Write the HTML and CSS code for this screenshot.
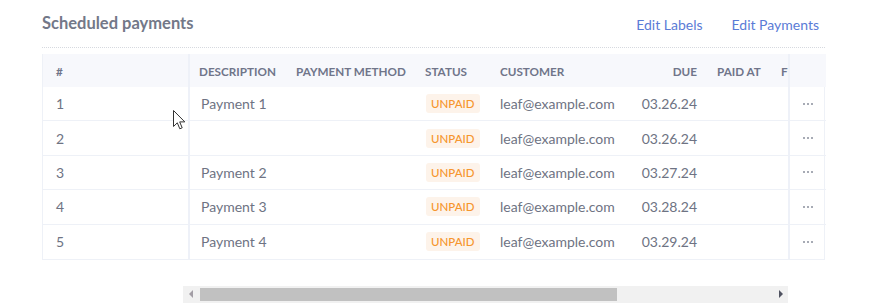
FILE: index.html
```html
<!DOCTYPE html>
<html lang="en">
<head>
  <meta charset="UTF-8">
  <title>Scheduled payments</title>
  <link rel="stylesheet" href="styles.css">
</head>
<body>
  <div class="panel">
    <div class="panel-head">
      <h3 class="panel-title">Scheduled payments</h3>
      <div class="panel-links">
        <a href="#">Edit Labels</a>
        <a href="#">Edit Payments</a>
      </div>
    </div>

    <div class="grid">
      <div class="col-fixed">
        <div class="cell head">#</div>
        <div class="cell">1</div>
        <div class="cell">2</div>
        <div class="cell">3</div>
        <div class="cell">4</div>
        <div class="cell">5</div>
      </div>

      <div class="col-scroll">
        <div class="row head">
          <div class="c desc">Description</div>
          <div class="c method">Payment method</div>
          <div class="c status">Status</div>
          <div class="c customer">Customer</div>
          <div class="c due">Due</div>
          <div class="c paid">Paid at</div>
          <div class="c fee">Fee</div>
        </div>
        <div class="row">
          <div class="c desc">Payment 1</div>
          <div class="c method"></div>
          <div class="c status"><span class="badge">UNPAID</span></div>
          <div class="c customer">leaf@example.com</div>
          <div class="c due">03.26.24</div>
          <div class="c paid"></div>
          <div class="c fee"></div>
        </div>
        <div class="row">
          <div class="c desc"></div>
          <div class="c method"></div>
          <div class="c status"><span class="badge">UNPAID</span></div>
          <div class="c customer">leaf@example.com</div>
          <div class="c due">03.26.24</div>
          <div class="c paid"></div>
          <div class="c fee"></div>
        </div>
        <div class="row">
          <div class="c desc">Payment 2</div>
          <div class="c method"></div>
          <div class="c status"><span class="badge">UNPAID</span></div>
          <div class="c customer">leaf@example.com</div>
          <div class="c due">03.27.24</div>
          <div class="c paid"></div>
          <div class="c fee"></div>
        </div>
        <div class="row">
          <div class="c desc">Payment 3</div>
          <div class="c method"></div>
          <div class="c status"><span class="badge">UNPAID</span></div>
          <div class="c customer">leaf@example.com</div>
          <div class="c due">03.28.24</div>
          <div class="c paid"></div>
          <div class="c fee"></div>
        </div>
        <div class="row">
          <div class="c desc">Payment 4</div>
          <div class="c method"></div>
          <div class="c status"><span class="badge">UNPAID</span></div>
          <div class="c customer">leaf@example.com</div>
          <div class="c due">03.29.24</div>
          <div class="c paid"></div>
          <div class="c fee"></div>
        </div>
      </div>

      <div class="col-actions">
        <div class="cell head"></div>
        <div class="cell"><span class="dots"><i></i><i></i><i></i></span></div>
        <div class="cell"><span class="dots"><i></i><i></i><i></i></span></div>
        <div class="cell"><span class="dots"><i></i><i></i><i></i></span></div>
        <div class="cell"><span class="dots"><i></i><i></i><i></i></span></div>
        <div class="cell"><span class="dots"><i></i><i></i><i></i></span></div>
      </div>

      <svg class="cursor" width="13" height="21" viewBox="0 0 13 21">
        <path d="M0.5 0.5 L0.5 16.5 L4.3 12.8 L6.8 18.8 L9.2 17.8 L6.7 11.9 L11.8 11.9 Z" fill="#fff" stroke="#333" stroke-width="1"/>
      </svg>
    </div>

    <div class="hscroll">
      <span class="arrow left"></span>
      <div class="track"><div class="thumb"></div></div>
      <span class="arrow right"></span>
    </div>
  </div>
</body>
</html>
```

FILE: styles.css
```css
html, body { margin: 0; padding: 0; background: #fff; }
body { font-family: Lato, "Open Sans", sans-serif; color: #6e7383; }

.panel { width: 783px; margin-left: 42px; }

.panel-head { display: flex; justify-content: space-between; align-items: flex-start; height: 47px; border-bottom: 1px dotted #d6d9df; }
.panel-title { margin: 13px 0 0 0; font-size: 16.5px; font-weight: 700; color: #737888; }
.panel-links { display: flex; gap: 29px; margin: 16px 6px 0 0; }
.panel-links a { font-size: 14px; color: #5a7bd6; text-decoration: none; }

.grid { position: relative; display: flex; margin-top: 6px; border: 1px solid #eef1f7; border-top: 0; }

.cell, .row { height: 34.4px; box-sizing: border-box; border-bottom: 1px solid #eef1f7; }
.head { height: 33px; background: #f7f8fc; border-bottom: 0; font-size: 11.7px; font-weight: 700; color: #70758a; text-transform: uppercase; }
.row.head .c { height: 33px; }

.col-fixed { width: 145px; flex: none; border-right: 2px solid #eef1f8; }
.col-fixed .cell { display: flex; align-items: center; padding-left: 13px; font-size: 14px; }
.col-fixed .cell.head { font-size: 11.7px; }
.col-fixed .cell:last-child, .col-actions .cell:last-child, .row:last-child { border-bottom: 0; }

.col-scroll { width: 598px; flex: none; overflow: hidden; }
.row { display: flex; width: 700px; }
.c { flex: none; display: flex; align-items: center; box-sizing: border-box; padding-left: 10px; font-size: 14px; white-space: nowrap; }
.row.head .c { font-size: 11.7px; }
.desc { width: 96px; padding-left: 11px; }
.row.head .desc { padding-left: 9px; }
.method { width: 129px; }
.status { width: 75px; }
.customer { width: 131px; }
.due { width: 86px; justify-content: flex-end; padding-left: 0; padding-right: 10px; }
.paid { width: 64px; }
.fee { width: 100px; }

.badge { display: inline-block; margin-left: 1px; padding: 4px 5px 3px 5px; border-radius: 3px; background: #fdf3ea; color: #f6962e; font-size: 11.5px; font-weight: 500; line-height: 12px; }

.col-actions { width: 36px; flex: none; border-left: 2px solid #eef1f8; }
.col-actions .cell { display: flex; align-items: center; justify-content: center; }
.dots { display: flex; gap: 2px; }
.dots i { width: 2px; height: 2px; border-radius: 1px; background: #8a8f9c; }

.cursor { position: absolute; left: 130px; top: 56px; }

.hscroll { display: flex; align-items: center; width: 605px; height: 17px; margin: 26px 0 0 141px; background: #f1f1f1; }
.track { flex: 1; height: 13px; }
.thumb { width: 417px; height: 13px; background: #c1c1c1; }
.arrow { width: 0; height: 0; border-top: 4px solid transparent; border-bottom: 4px solid transparent; }
.arrow.left { border-right: 4px solid #a39ea6; margin: 0 7px 0 6px; }
.arrow.right { border-left: 4px solid #505361; margin: 0 5px 0 10px; }
```
